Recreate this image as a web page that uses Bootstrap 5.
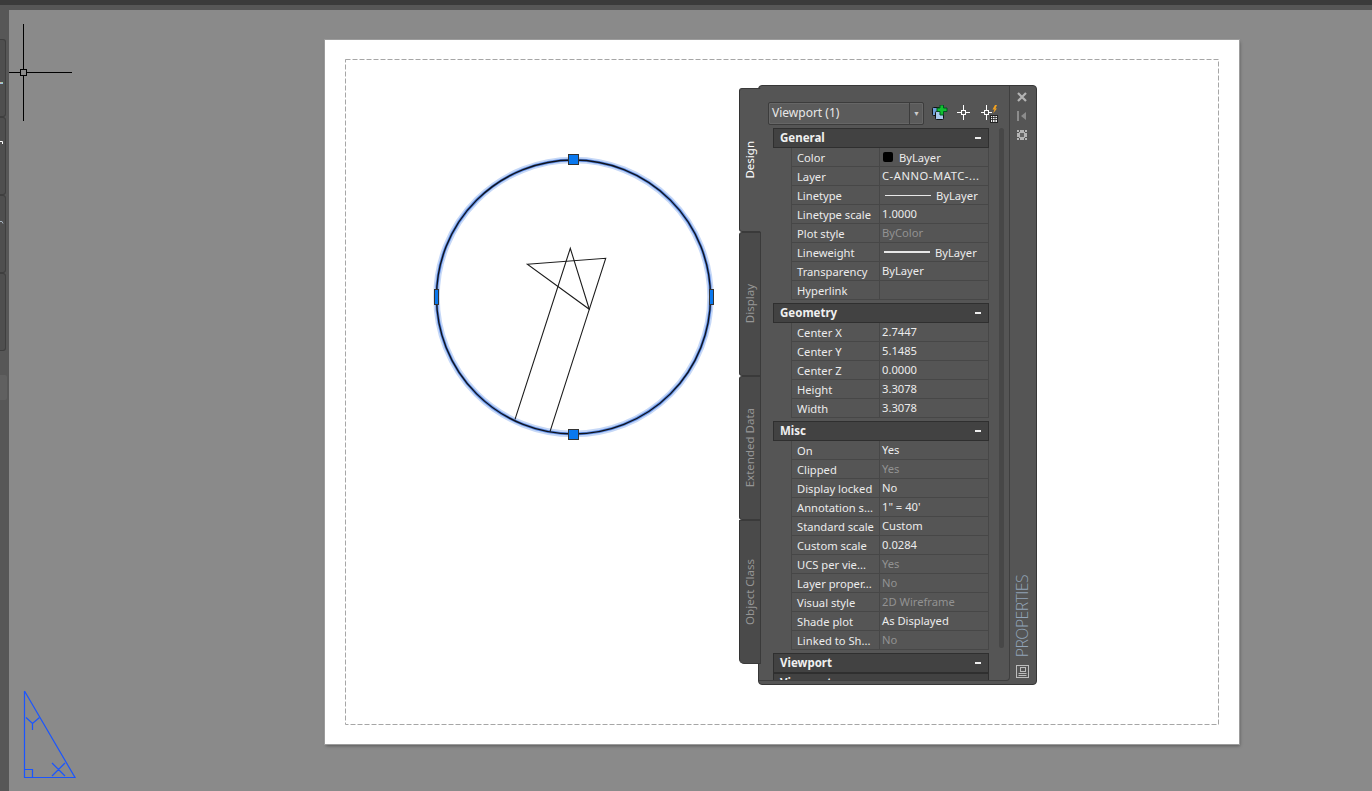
<!DOCTYPE html>
<html lang="en">
<head>
<meta charset="utf-8">
<title>Viewport properties</title>
<link href="https://cdn.jsdelivr.net/npm/bootstrap@5.3.0/dist/css/bootstrap.min.css" rel="stylesheet">
<style>
html,body{height:100%;margin:0;overflow:hidden;background:#555;font-family:"Noto Sans","Liberation Sans",Arial,sans-serif}
.top-bar{height:5px;background:#3b3b3b}
.top-gap{height:5px;background:#575757}
.work{height:781px}
.side{width:9px;background:#575757;padding-top:29px}
.side-tab{width:6px;height:78px;background:#4f4f4f;border:1px solid #3f3f3f;border-left:0;border-radius:0 3px 3px 0}
.side-tab svg{display:block}
.side-slot{width:7px;height:25px;background:#606060;margin-top:24px;border-radius:0 2px 2px 0}
.canvas-area{flex:1;background:#8a8a8a}
.sheet{left:316px;top:30px;width:914px;height:704px;background:#fff;box-shadow:0 0 0 1px #9c9c9c,1px 2px 3px rgba(0,0,0,.35)}
.draw{left:0;top:0;width:1363px;height:781px}
.pal{left:730px;top:75px;width:298px;height:600px;font-size:11.5px;color:#ececec}
.pal-tabs{width:22px;margin-top:3px;z-index:2}
.pal-tab{height:144px;background:#4a4a4a;border:1px solid #3a3a3a;border-left-color:#333;color:#969696;border-radius:3px 0 0 3px}
.pal-tab.on{background:#555;color:#fff;border-right-color:#555}
.pal-tab:last-child{border-radius:0 0 0 5px}
.vtext{writing-mode:vertical-rl;transform:rotate(180deg);white-space:nowrap}
.pal-frame{flex:1;margin-left:-3px;background:#555;border:1px solid #373737;border-radius:4px}
.pal-body{width:251px;border-right:1px solid #3f3f3f;border-bottom:1px solid #3f3f3f;border-radius:0 0 4px 0;margin-bottom:3px}
.bar{height:42px;padding:16px 0 0 9px}
.combo{width:156px;height:23px;background:#5b5b5b;border:1px solid #3c3c3c;border-radius:2px;color:#e8e8e8;box-shadow:inset 0 0 0 1px #666}
.combo-txt{flex:1;padding-left:3px;line-height:20px;font-size:12px}
.combo-btn{width:14px;border-left:1px solid #3c3c3c;color:#ccc;font-size:7px;line-height:21px;text-align:center}
.tool-set{margin-left:8px;gap:9px;padding-top:3px}
.pal-scroll{height:552px;overflow:hidden;padding-left:14px}
.grid-col{width:216px}
.scroller{width:5px;height:520px;background:#474747;border-radius:3px;margin-left:10px}
.sec{height:20px;background:#424242;border:1px solid #2f2f2f;color:#f0f0f0;font-weight:700;padding:0 7px 0 6px;line-height:18px}
.sec-dash{width:6px;height:2px;background:#eee}
.sec-list{margin-left:18px;margin-bottom:3px}
.prow{height:19px;border-bottom:1px solid #474747;font-size:11.2px}
.plabel{width:89px;padding-left:5px;border-left:1px solid #474747;border-right:1px solid #474747;white-space:nowrap;overflow:hidden;line-height:19px}
.pval{flex:1;padding-left:2px;white-space:nowrap;border-right:1px solid #474747;line-height:17px}
.pval-wide{letter-spacing:.55px}
.dim{color:#929292}
.swatch{width:10px;height:10px;background:#000;border-radius:2px;margin:0 6px 0 1px}
.ln{height:1px;background:#e8e8e8;width:46px;margin:0 5px 0 3px}
.ln.thick{height:2px;margin-left:2px}
.title-strip{flex:1;padding:5px 2px 6px 0}
.strip-ic{width:12px;height:12px;margin-bottom:7px}
.strip-word{color:#92a4b8;font-size:15.8px;font-weight:300;font-family:"Open Sans",sans-serif;letter-spacing:-.55px;line-height:18px}
</style>
</head>
<body>
<div class="top-bar"></div>
<div class="top-gap"></div>
<div class="work d-flex">
  <div class="side d-flex flex-column">
    <div class="side-tab"><svg width="5" height="76" viewBox="0 0 5 76"><path d="M0 42.500H1" stroke="#e8a0a0"/><path d="M1 42.500H3" stroke="#9fd0a8"/><path d="M0 43.500H3" stroke="#9fc0e0"/></svg></div>
    <div class="side-tab"><svg width="5" height="76" viewBox="0 0 5 76" fill="none"><path d="M0 23.500H2.500V26" stroke="#fff"/></svg></div>
    <div class="side-tab"><svg width="5" height="76" viewBox="0 0 5 76" fill="none"><path d="M0 25.500H2L3 27.500" stroke="#a8b4c0"/></svg></div>
    <div class="side-tab"></div>
    <div class="side-slot"></div>
  </div>
  <div class="canvas-area position-relative">
    <div class="sheet position-absolute"></div>
    <svg class="draw position-absolute" viewBox="9 10 1363 781" fill="none">
      <rect x="345.500" y="59.500" width="873" height="665" stroke="#a6a6a6" stroke-dasharray="5 2"/>
      <circle cx="573.500" cy="297" r="137" stroke="#c6d8f7" stroke-width="6.500"/>
      <circle cx="573.500" cy="297" r="137" stroke="#5a8ae6" stroke-width="3"/>
      <circle cx="573.500" cy="297" r="137" stroke="#10131c" stroke-width="1.400"/>
      <g stroke="#1c1c1c" stroke-width="1.100">
        <path d="M527.300 264.300 605.700 258.300 589.300 309.300Z"/>
        <path d="M515 419.300 570.300 248.300 589.300 309.300 550 431.700"/>
      </g>
      <g fill="#0a78ee" stroke="#333">
        <rect x="568.500" y="154.500" width="10" height="10"/>
        <rect x="568.500" y="429.500" width="10" height="10"/>
        <rect x="434.500" y="289.500" width="4" height="15"/>
        <rect x="709.500" y="289.500" width="4" height="15"/>
      </g>
      <g stroke="#000" stroke-width="1">
        <path d="M23.500 24V69M23.500 76V121M9 72.500H20M27 72.500H72"/>
        <rect x="20.500" y="69.500" width="6" height="6"/>
      </g>
      <g stroke="#1a55ff" stroke-width="1.200">
        <path d="M24.500 691V777.500H75L24.500 691"/>
        <path d="M24.500 769.500H32.500V777.500M26 717.500 32.500 723.500 39.500 717.500M32.500 723.500V730M52 776 65 763M52 763 65 776"/>
      </g>
    </svg>

    <div class="pal position-absolute d-flex">
      <div class="pal-tabs">
        <div class="pal-tab on d-flex justify-content-center align-items-center"><span class="vtext">Design</span></div>
        <div class="pal-tab d-flex justify-content-center align-items-center"><span class="vtext">Display</span></div>
        <div class="pal-tab d-flex justify-content-center align-items-center"><span class="vtext">Extended Data</span></div>
        <div class="pal-tab d-flex justify-content-center align-items-center"><span class="vtext">Object Class</span></div>
      </div>
      <div class="pal-frame d-flex">
        <div class="pal-body">
          <div class="bar d-flex">
            <div class="combo d-flex"><span class="combo-txt">Viewport (1)</span><span class="combo-btn">▼</span></div>
            <div class="tool-set d-flex align-items-start">
              <svg width="16" height="15" viewBox="0 0 16 15">
                <rect x=".5" y="2.500" width="8" height="8" rx="1" fill="#6f9fd8" stroke="#111"/>
                <rect x="3.500" y="6.500" width="8" height="8" rx="1" fill="#a8c8ec" stroke="#111"/>
                <path d="M8 0h3.500v3H15v3.500h-3.500V10H8V6.500H5V3h3z" fill="#12c030" stroke="#052"/>
              </svg>
              <svg width="15" height="15" viewBox="0 0 15 15" fill="none" stroke="#fff"><path d="M6.500 0V5M6.500 10V15M0 7.500H4M9 7.500H13"/><rect x="4.500" y="5.500" width="4" height="4"/></svg>
              <svg width="17" height="18" viewBox="0 0 17 18" fill="none"><path d="M5.500 0V5M5.500 10V15M0 7.500H3M8 7.500H11" stroke="#fff"/><rect x="3.500" y="5.500" width="4" height="4" stroke="#fff"/><path d="M14 0 11.500 4.500H13.500L12 8.500 16 3.500H14.500L16 0Z" fill="#f0a020"/><rect x="9.500" y="10.500" width="7" height="7" fill="#eee" stroke="#222"/><path d="M9 12.500H17M9 14.500H17M11.500 10V18M14 10V18" stroke="#222" stroke-width=".8"/></svg>
            </div>
          </div>
          <div class="pal-scroll d-flex">
            <div class="grid-col">
              <div class="sec d-flex justify-content-between align-items-center"><span>General</span><span class="sec-dash"></span></div>
              <div class="sec-list">
                <div class="prow d-flex"><div class="plabel">Color</div><div class="pval d-flex align-items-center"><span class="swatch"></span>ByLayer</div></div>
                <div class="prow d-flex"><div class="plabel">Layer</div><div class="pval pval-wide">C-ANNO-MATC-...</div></div>
                <div class="prow d-flex"><div class="plabel">Linetype</div><div class="pval d-flex align-items-center"><span class="ln"></span>ByLayer</div></div>
                <div class="prow d-flex"><div class="plabel">Linetype scale</div><div class="pval">1.0000</div></div>
                <div class="prow d-flex"><div class="plabel">Plot style</div><div class="pval dim">ByColor</div></div>
                <div class="prow d-flex"><div class="plabel">Lineweight</div><div class="pval d-flex align-items-center"><span class="ln thick"></span>ByLayer</div></div>
                <div class="prow d-flex"><div class="plabel">Transparency</div><div class="pval">ByLayer</div></div>
                <div class="prow d-flex"><div class="plabel">Hyperlink</div><div class="pval"></div></div>
              </div>
              <div class="sec d-flex justify-content-between align-items-center"><span>Geometry</span><span class="sec-dash"></span></div>
              <div class="sec-list">
                <div class="prow d-flex"><div class="plabel">Center X</div><div class="pval">2.7447</div></div>
                <div class="prow d-flex"><div class="plabel">Center Y</div><div class="pval">5.1485</div></div>
                <div class="prow d-flex"><div class="plabel">Center Z</div><div class="pval">0.0000</div></div>
                <div class="prow d-flex"><div class="plabel">Height</div><div class="pval">3.3078</div></div>
                <div class="prow d-flex"><div class="plabel">Width</div><div class="pval">3.3078</div></div>
              </div>
              <div class="sec d-flex justify-content-between align-items-center"><span>Misc</span><span class="sec-dash"></span></div>
              <div class="sec-list">
                <div class="prow d-flex"><div class="plabel">On</div><div class="pval">Yes</div></div>
                <div class="prow d-flex"><div class="plabel">Clipped</div><div class="pval dim">Yes</div></div>
                <div class="prow d-flex"><div class="plabel">Display locked</div><div class="pval">No</div></div>
                <div class="prow d-flex"><div class="plabel">Annotation s...</div><div class="pval">1" = 40'</div></div>
                <div class="prow d-flex"><div class="plabel">Standard scale</div><div class="pval">Custom</div></div>
                <div class="prow d-flex"><div class="plabel">Custom scale</div><div class="pval">0.0284</div></div>
                <div class="prow d-flex"><div class="plabel">UCS per vie...</div><div class="pval dim">Yes</div></div>
                <div class="prow d-flex"><div class="plabel">Layer proper...</div><div class="pval dim">No</div></div>
                <div class="prow d-flex"><div class="plabel">Visual style</div><div class="pval dim">2D Wireframe</div></div>
                <div class="prow d-flex"><div class="plabel">Shade plot</div><div class="pval">As Displayed</div></div>
                <div class="prow d-flex"><div class="plabel">Linked to Sh...</div><div class="pval dim">No</div></div>
              </div>
              <div class="sec d-flex justify-content-between align-items-center"><span>Viewport</span><span class="sec-dash"></span></div>
              <div class="sec"><span>Viewport</span></div>
            </div>
            <div class="scroller"></div>
          </div>
        </div>
        <div class="title-strip d-flex flex-column align-items-center">
          <svg class="strip-ic" viewBox="0 0 12 12" fill="none" stroke="#b4b4b4" stroke-width="2.200"><path d="M2 2 10 10M10 2 2 10"/></svg>
          <svg class="strip-ic" viewBox="0 0 12 12" fill="#8c8c8c"><path d="M1 1h2v10H1zM10 2v8L5 6z"/></svg>
          <svg class="strip-ic" viewBox="0 0 12 12" fill="#b4b4b4"><path d="M1 1h2v2h1V1h4v2h1V1h2v2H9v1h2v4H9v1h2v2H9V9H8v2H4V9H3v2H1V9h2V8H1V4h2V3H1z"/><rect x="4" y="4" width="4" height="4" fill="#666"/></svg>
          <div class="flex-grow-1"></div>
          <div class="vtext strip-word">PROPERTIES</div>
          <svg class="mt-2" width="13" height="13" viewBox="0 0 13 13" fill="none" stroke="#bdbdbd"><rect x=".5" y=".5" width="12" height="12"/><rect x="4.500" y="2.500" width="5" height="4"/><path d="M2.500 8.500H10.500M2.500 10.500H10.500"/></svg>
        </div>
      </div>
    </div>
  </div>
</div>
<script src="https://cdn.jsdelivr.net/npm/bootstrap@5.3.0/dist/js/bootstrap.bundle.min.js"></script>
</body>
</html>
